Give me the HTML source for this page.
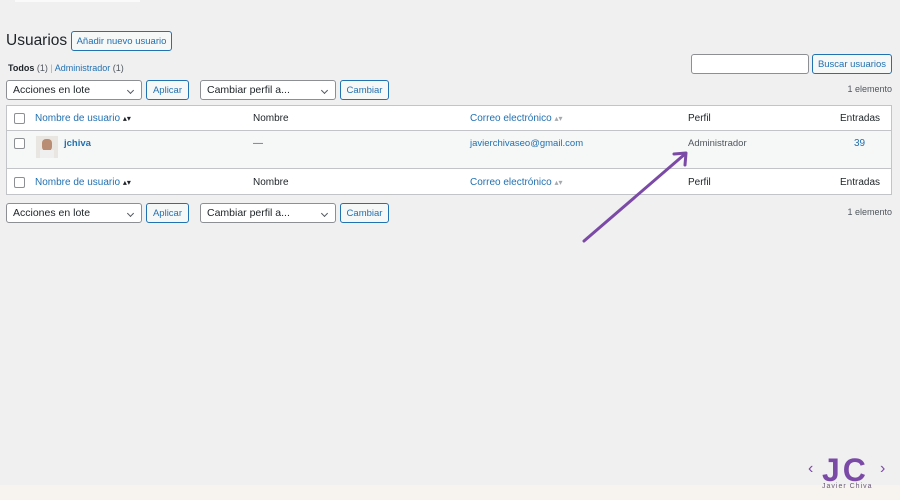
<!DOCTYPE html>
<html><head><meta charset="utf-8"><style>
*{box-sizing:border-box;margin:0;padding:0}
body{width:900px;height:500px;background:#f0f0f1;font-family:"Liberation Sans",sans-serif;position:relative;overflow:hidden;color:#1d2327}
.a{position:absolute}
.btn{position:absolute;border:1px solid #2271b1;color:#2271b1;background:#f6f7f7;border-radius:3px;font-size:9.5px;display:flex;align-items:center;justify-content:center}
.sel{position:absolute;border:1px solid #8c8f94;background:#fff;border-radius:3px;font-size:10.5px;padding-left:6px;display:flex;align-items:center}
.sel:after{content:"";position:absolute;right:8px;top:7px;width:4px;height:4px;border-right:1px solid #50575e;border-bottom:1px solid #50575e;transform:rotate(45deg)}
.t{position:absolute;font-size:10px;white-space:nowrap}
.lk{color:#2271b1}
.cb{position:absolute;width:11px;height:11px;border:1px solid #8c8f94;border-radius:2px;background:#fff}
.sort{font-size:8px;color:#a7aaad}
</style></head><body>
<div class="a" style="left:15px;top:0;width:125px;height:2px;background:#fafafa"></div>
<div class="t" style="left:6px;top:32px;font-size:15.5px">Usuarios</div>
<div class="btn" style="left:71px;top:31px;width:101px;height:20px">Añadir nuevo usuario</div>
<div class="t" style="left:8px;top:63px;font-size:9px"><b>Todos</b> <span style="color:#50575e">(1)</span> <span style="color:#a7aaad">|</span> <span class="lk">Administrador</span> <span style="color:#50575e">(1)</span></div>
<div class="a" style="left:691px;top:54px;width:118px;height:20px;border:1px solid #8c8f94;background:#fff;border-radius:3px"></div>
<div class="btn" style="left:812px;top:54px;width:80px;height:20px">Buscar usuarios</div>

<div class="sel" style="left:6px;top:80px;width:136px;height:20px">Acciones en lote</div>
<div class="btn" style="left:146px;top:80px;width:43px;height:20px">Aplicar</div>
<div class="sel" style="left:200px;top:80px;width:136px;height:20px">Cambiar perfil a...</div>
<div class="btn" style="left:340px;top:80px;width:49px;height:20px">Cambiar</div>
<div class="t" style="right:8px;top:84px;font-size:9px;color:#50575e">1 elemento</div>

<div class="a" style="left:6px;top:105px;width:886px;height:90px;background:#fff;border:1px solid #c3c4c7"></div>
<div class="a" style="left:7px;top:130px;width:884px;height:39px;background:#f6f7f7;border-top:1px solid #c3c4c7;border-bottom:1px solid #c3c4c7"></div>

<div class="cb" style="left:14px;top:113px"></div>
<div class="t lk" style="left:35px;top:113px">Nombre de usuario <span style="color:#1d2327;font-size:8px">▴▾</span></div>
<div class="t" style="left:253px;top:113px">Nombre</div>
<div class="t lk" style="left:470px;top:113px">Correo electrónico <span class="sort">▴▾</span></div>
<div class="t" style="left:688px;top:113px">Perfil</div>
<div class="t" style="left:840px;top:113px">Entradas</div>

<div class="cb" style="left:14px;top:138px"></div>
<div class="a" style="left:36px;top:136px;width:22px;height:22px;background:#e9e6e2"><div class="a" style="left:6px;top:3px;width:10px;height:12px;background:#b98c74;border-radius:4px"></div><div class="a" style="left:4px;top:14px;width:14px;height:8px;background:#efefef"></div></div>
<div class="t lk" style="left:64px;top:138px;font-weight:bold;font-size:9.5px">jchiva</div>
<div class="t" style="left:253px;top:138px;color:#50575e">—</div>
<div class="t lk" style="left:470px;top:138px;font-size:9.5px">javierchivaseo@gmail.com</div>
<div class="t" style="left:688px;top:138px;font-size:9.5px;color:#50575e">Administrador</div>
<div class="t lk" style="left:854px;top:138px">39</div>

<div class="cb" style="left:14px;top:177px"></div>
<div class="t lk" style="left:35px;top:177px">Nombre de usuario <span style="color:#1d2327;font-size:8px">▴▾</span></div>
<div class="t" style="left:253px;top:177px">Nombre</div>
<div class="t lk" style="left:470px;top:177px">Correo electrónico <span class="sort">▴▾</span></div>
<div class="t" style="left:688px;top:177px">Perfil</div>
<div class="t" style="left:840px;top:177px">Entradas</div>

<div class="sel" style="left:6px;top:203px;width:136px;height:20px">Acciones en lote</div>
<div class="btn" style="left:146px;top:203px;width:43px;height:20px">Aplicar</div>
<div class="sel" style="left:200px;top:203px;width:136px;height:20px">Cambiar perfil a...</div>
<div class="btn" style="left:340px;top:203px;width:49px;height:20px">Cambiar</div>
<div class="t" style="right:8px;top:207px;font-size:9px;color:#50575e">1 elemento</div>

<svg class="a" style="left:0;top:0" width="900" height="500"><g stroke="#7b4aa6" stroke-width="3" fill="none" stroke-linecap="round" stroke-linejoin="round"><line x1="584" y1="241" x2="685" y2="154"/><polyline points="674,154 686,153 685,165"/></g></svg>

<div class="a" style="left:0;top:485px;width:900px;height:15px;background:#f7f3ee"></div>
<div class="t" style="left:808px;top:460px;font-size:16px;color:#7b4aa6">‹</div>
<div class="t" style="left:822px;top:452px;font-size:32px;font-weight:bold;color:#7b4aa6;letter-spacing:3px">JC</div>
<div class="t" style="left:880px;top:460px;font-size:16px;color:#7b4aa6">›</div>
<div class="t" style="left:822px;top:483px;font-size:7px;color:#6a5a7a;letter-spacing:1px">Javier Chiva</div>
</body></html>
